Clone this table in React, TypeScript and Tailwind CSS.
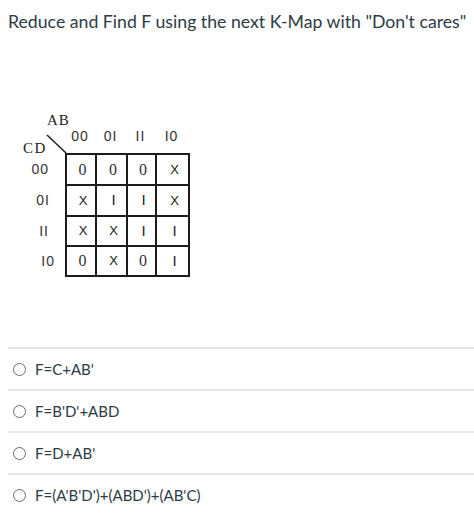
import React from "react";

const cells: string[][] = [
  ["0", "0", "0", "X"],
  ["X", "I", "I", "X"],
  ["X", "X", "I", "I"],
  ["0", "X", "0", "I"],
];

const rowLabels = [
  { t: "00", cls: "pr-[16px]" },
  { t: "0I", cls: "pr-[15px]" },
  { t: "II", cls: "pr-[16px]" },
  { t: "I0", cls: "pr-[10px]" },
];

const colLabels = ["00", "0I", "II", "I0"];

const options = ["F=C+AB'", "F=B'D'+ABD", "F=D+AB'", "F=(A'B'D')+(ABD')+(AB'C)"];

function Cell({ v }: { v: string }) {
  if (v === "0") {
    return (
      <div className="bg-white flex items-center justify-center pl-[3px] text-[16px] text-[#333]" style={{ fontFamily: '"Liberation Serif", serif' }}>
        0
      </div>
    );
  }
  return (
    <div className="bg-white flex items-center justify-center pl-[4px] text-[#222]" style={{ fontFamily: '"Liberation Sans", sans-serif' }}>
      {v === "X" ? <span className="text-[13px] font-light">X</span> : <span className="text-[15px]">I</span>}
    </div>
  );
}

export default function App() {
  return (
    <div className="w-[474px] h-[514px] bg-white overflow-hidden" style={{ fontFamily: 'Lato, "Liberation Sans", sans-serif' }}>
      <h1 className="pl-[8px] pt-[11px] text-[17.7px] leading-[22px] text-[#2d3b45]">
        Reduce and Find F using the next K-Map with "Don't cares"
      </h1>

      <div className="mt-[80px] flex flex-col">
        <div className="flex h-[40px]">
          <div className="relative w-[65px] shrink-0" style={{ fontFamily: '"Liberation Serif", serif' }}>
            <span className="absolute left-[47px] top-[-1px] text-[15px] leading-[16px] text-[#222] tracking-[1px]">AB</span>
            <span className="absolute left-[23px] top-[27px] text-[15px] leading-[16px] text-[#222] tracking-[1.5px]">CD</span>
            <svg className="absolute left-[46px] top-[21px]" width="22" height="20" viewBox="0 0 22 20">
              <line x1="1" y1="1" x2="20" y2="19" stroke="#222" strokeWidth="1.6" />
            </svg>
          </div>
          <div className="grid grid-cols-[30px_31px_29px_33px] items-end pb-[10px] text-[14px] leading-[14px] text-[#333]" style={{ fontFamily: '"Liberation Sans", sans-serif' }}>
            {colLabels.map((c, i) => (
              <div key={i} className="flex justify-center tracking-[1px]">{c}</div>
            ))}
          </div>
        </div>
        <div className="flex">
          <div className="w-[65px] shrink-0 grid grid-rows-[31px_31px_30px_30px] pt-[1px] text-[14px] text-[#333] tracking-[1px]" style={{ fontFamily: '"Liberation Sans", sans-serif' }}>
            {rowLabels.map((r, i) => (
              <div key={i} className={`flex items-center justify-end ${r.cls}`}>{r.t}</div>
            ))}
          </div>
          <div className="grid grid-cols-[28px_29px_27px_31px] grid-rows-[29px_29px_28px_28px] gap-[2px] p-[2px] bg-[#1c1c1c]">
            {cells.flat().map((v, i) => (
              <Cell key={i} v={v} />
            ))}
          </div>
        </div>
      </div>

      <div className="mt-[70px] ml-[8px] flex flex-col">
        {options.map((o, i) => (
          <div key={i} className="h-[42px] border-t-2 border-[#e6e6e6] flex items-center">
            <span className="ml-[5px] w-[13px] h-[13px] rounded-full border border-[#6b6b6b] shrink-0" />
            <span className="ml-[9px] text-[15px] text-[#2d3b45]">{o}</span>
          </div>
        ))}
      </div>
    </div>
  );
}
